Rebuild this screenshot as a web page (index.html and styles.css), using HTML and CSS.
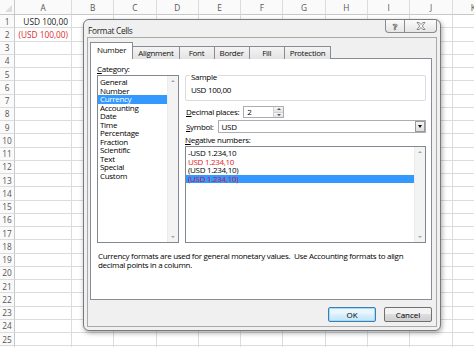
FILE: index.html
```html
<!DOCTYPE html>
<html lang="en">
<head>
    <title>Format Cells</title>
    <link rel="stylesheet" href="styles.css">
</head>
<body>
    <div class="sheet" id="sheet"></div>

    <div class="dialog">
        <div class="titlebar">
            <span class="title">Format Cells</span>
            <div class="caption-buttons">
                <span class="caption-btn help"><span class="help-mark">?</span></span>
                <span class="caption-btn close">
                    <svg width="10" height="8" viewBox="0 0 10 8">
                        <path d="M1 0.5 H3.2 L5 2.6 L6.8 0.5 H9 L6.2 4 L9 7.5 H6.8 L5 5.4 L3.2 7.5 H1 L3.8 4 Z" fill="#fff" stroke="#707070" stroke-width="0.8"/>
                    </svg>
                </span>
            </div>
        </div>

        <div class="client">
            <div class="tabs">
                <span class="tab active">Number</span>
                <span class="tab">Alignment</span>
                <span class="tab">Font</span>
                <span class="tab">Border</span>
                <span class="tab">Fill</span>
                <span class="tab">Protection</span>
            </div>

            <div class="panel">
                <div class="panel-body">
                    <div class="left-col">
                        <div class="label"><u>C</u>ategory:</div>
                        <div class="listbox category-list">
                            <div class="list-items">
                                <div class="item">General</div>
                                <div class="item">Number</div>
                                <div class="item selected">Currency</div>
                                <div class="item">Accounting</div>
                                <div class="item">Date</div>
                                <div class="item">Time</div>
                                <div class="item">Percentage</div>
                                <div class="item">Fraction</div>
                                <div class="item">Scientific</div>
                                <div class="item">Text</div>
                                <div class="item">Special</div>
                                <div class="item">Custom</div>
                            </div>
                            <div class="vscroll">
                                <i class="arrow up"></i>
                                <i class="arrow down"></i>
                            </div>
                        </div>
                    </div>

                    <div class="right-col">
                        <div class="group">
                            <div class="group-title">Sample</div>
                            <div class="sample-value">USD 100,00</div>
                        </div>

                        <div class="field-row decimals">
                            <span class="field-label"><u>D</u>ecimal places:</span>
                            <div class="spinner">
                                <span class="spinner-value">2</span>
                                <div class="spin-buttons">
                                    <span class="spin-btn"><i class="arrow up dark"></i></span>
                                    <span class="spin-btn"><i class="arrow down dark"></i></span>
                                </div>
                            </div>
                        </div>

                        <div class="field-row symbol">
                            <span class="field-label"><u>S</u>ymbol:</span>
                            <div class="select">
                                <span class="select-value">USD</span>
                                <span class="drop-btn"><i class="arrow down black"></i></span>
                            </div>
                        </div>

                        <div class="label"><u>N</u>egative numbers:</div>
                        <div class="listbox negative-list">
                            <div class="list-items">
                                <div class="item">-USD 1.234,10</div>
                                <div class="item red">USD 1.234,10</div>
                                <div class="item">(USD 1.234,10)</div>
                                <div class="item selected red">(USD 1.234,10)</div>
                            </div>
                            <div class="vscroll">
                                <i class="arrow up"></i>
                                <i class="arrow down"></i>
                            </div>
                        </div>
                    </div>
                </div>

                <p class="description">Currency formats are used for general monetary values.&nbsp; Use Accounting formats to align<br>decimal points in a column.</p>
            </div>

            <div class="buttons">
                <button class="btn default">OK</button>
                <button class="btn">Cancel</button>
            </div>
        </div>
    </div>

    <script>
        // build the worksheet grid behind the dialog
        const sheet = document.getElementById('sheet');
        const columns = ['A', 'B', 'C', 'D', 'E', 'F', 'G', 'H', 'I', 'J', 'K'];
        const values = {
            A1: { text: 'USD 100,00' },
            A2: { text: '(USD 100,00)', negative: true }
        };

        function addCell(className, text) {
            const cell = document.createElement('div');
            cell.className = className;
            cell.textContent = text || '';
            sheet.appendChild(cell);
            return cell;
        }

        addCell('cell corner').innerHTML = '<i class="select-all"></i>';
        columns.forEach(col => addCell('cell col-head', col));

        for (let row = 1; row <= 26; row++) {
            addCell('cell row-head', row);
            columns.forEach(col => {
                const value = values[col + row];
                const cell = addCell('cell', value ? value.text : '');
                if (value && value.negative) {
                    cell.classList.add('negative');
                }
            });
        }
    </script>
</body>
</html>
```

FILE: styles.css
```css
body {
    margin: 0;
    width: 474px;
    height: 347px;
    overflow: hidden;
    position: relative;
    background-color: #fff;
    font-family: "Open Sans", "Noto Sans", sans-serif;
    font-size: 8px;
    color: #000;
}

u {
    text-decoration-thickness: 1px;
    text-underline-offset: 1px;
}

/* worksheet */

.sheet {
    display: grid;
    grid-template-columns: 15px 57px repeat(10, 42.3px);
    grid-template-rows: 15px;
    grid-auto-rows: 13.25px;
    font-size: 8.3px;
    color: #222;
}

.cell {
    border-right: 1px solid #dadcdd;
    border-bottom: 1px solid #dadcdd;
    box-sizing: border-box;
    display: flex;
    align-items: center;
    justify-content: flex-end;
    padding-right: 3px;
    white-space: nowrap;
}

.cell.negative {
    color: #e02a2a;
}

.col-head,
.row-head,
.corner {
    justify-content: center;
    padding-right: 0;
    background-color: #fafafa;
    color: #555;
}

.col-head,
.corner {
    border-bottom-color: #c8c8c8;
}

.row-head,
.corner {
    border-right-color: #c8c8c8;
}

.corner {
    position: relative;
}

.select-all {
    position: absolute;
    right: 2px;
    bottom: 2px;
    border-left: 7px solid transparent;
    border-bottom: 7px solid #dcdcdc;
}

/* dialog */

.dialog {
    position: absolute;
    left: 83px;
    top: 19px;
    width: 358px;
    height: 312px;
    box-sizing: border-box;
    border: 1px solid #777a80;
    border-radius: 6px;
    padding: 0 3px 3px;
    background-color: #f0f0f0;
    box-shadow: 1px 2px 5px rgba(0, 0, 0, 0.35);
    display: flex;
    flex-direction: column;
    letter-spacing: -0.3px;
}

.titlebar {
    height: 17px;
    display: flex;
    justify-content: space-between;
    align-items: flex-start;
    flex-shrink: 0;
}

.title {
    margin-top: 6px;
    margin-left: 1px;
    line-height: 10px;
    font-size: 8.3px;
    color: #1e1e1e;
}

.caption-buttons {
    display: flex;
    height: 12px;
    border: 1px solid #8c8c8c;
    border-top: none;
    border-radius: 0 0 4px 4px;
    overflow: hidden;
    background: linear-gradient(#fbfbfb, #e6e6e6);
}

.caption-btn {
    display: flex;
    align-items: center;
    justify-content: center;
}

.caption-btn.help {
    width: 18px;
    border-right: 1px solid #8c8c8c;
}

.caption-btn.close {
    width: 31px;
}

.help-mark {
    font-size: 9px;
    font-weight: bold;
    line-height: 9px;
    color: #fff;
    -webkit-text-stroke: 0.7px #6a6a6a;
}

.client {
    flex: 1;
    border: 1px solid #a9a9a9;
    padding: 4px 4px 4px 2px;
    display: flex;
    flex-direction: column;
}

/* tabs */

.tabs {
    display: flex;
    align-items: flex-end;
    height: 17px;
    margin-bottom: -1px;
    position: relative;
    z-index: 1;
}

.tab {
    height: 13px;
    box-sizing: border-box;
    min-width: 36px;
    padding: 0 5px;
    margin-right: -1px;
    border: 1px solid #898c95;
    border-bottom: none;
    background: linear-gradient(#f4f4f4, #e3e3e3);
    display: flex;
    align-items: center;
    justify-content: center;
    line-height: 10px;
    color: #111;
}

.tab.active {
    height: 17px;
    padding: 0 6px 3px;
    background: #fff;
    position: relative;
    z-index: 2;
}

.panel {
    height: 242px;
    box-sizing: border-box;
    border: 1px solid #898c95;
    background-color: #fff;
    padding: 5px 5px 0 6px;
}

.panel-body {
    display: flex;
    gap: 6px;
}

.left-col {
    width: 82px;
    display: flex;
    flex-direction: column;
}

.right-col {
    flex: 1;
    display: flex;
    flex-direction: column;
}

.label {
    line-height: 10px;
    height: 10px;
    margin-bottom: 1px;
    white-space: nowrap;
}

.listbox {
    border: 1px solid #828790;
    background-color: #fff;
    display: flex;
    box-sizing: border-box;
}

.category-list {
    height: 168px;
}

.negative-list {
    height: 97px;
}

.list-items {
    flex: 1;
    padding-top: 2px;
}

.item {
    height: 8.55px;
    line-height: 8.55px;
    padding-left: 2px;
    white-space: nowrap;
}

.item.red {
    color: #e21b1b;
}

.item.selected {
    background-color: #3399ff;
    color: #fff;
}

.item.selected.red {
    color: #c4124a;
}

.vscroll {
    width: 10px;
    background-color: #f3f3f3;
    border-left: 1px solid #ececec;
    display: flex;
    flex-direction: column;
    justify-content: space-between;
    align-items: center;
    padding: 4px 0;
}

.arrow {
    display: block;
    width: 0;
    height: 0;
    border-left: 2px solid transparent;
    border-right: 2px solid transparent;
}

.arrow.up {
    border-bottom: 2px solid #a6a6a6;
}

.arrow.down {
    border-top: 2px solid #a6a6a6;
}

.arrow.dark.up {
    border-bottom-color: #555;
}

.arrow.dark.down {
    border-top-color: #555;
}

.arrow.black {
    border-left-width: 2.5px;
    border-right-width: 2.5px;
    border-top: 3px solid #111;
}

/* sample group */

.group {
    margin-top: 11px;
    height: 26px;
    box-sizing: border-box;
    border: 1px solid #dcdcdc;
    border-radius: 2px;
    padding-left: 5px;
}

.group-title {
    width: fit-content;
    margin-top: -4px;
    margin-left: -1px;
    padding: 0 1px;
    line-height: 9px;
    background-color: #fff;
}

.sample-value {
    margin-top: 4px;
    line-height: 9px;
}

/* fields */

.field-row {
    display: flex;
    align-items: center;
    gap: 4px;
    white-space: nowrap;
}

.field-row.decimals {
    margin-top: 5px;
    height: 12px;
}

.field-row.symbol {
    margin-top: 2px;
    margin-bottom: 2px;
    height: 13px;
}

.field-label {
    padding-left: 1px;
    line-height: 10px;
}

.spinner {
    width: 41px;
    height: 12px;
    box-sizing: border-box;
    border: 1px solid #abadb3;
    background-color: #fff;
    display: flex;
    justify-content: space-between;
}

.spinner-value,
.select-value {
    padding-left: 3px;
    line-height: 10px;
}

.spin-buttons {
    width: 10px;
    display: flex;
    flex-direction: column;
}

.spin-btn {
    flex: 1;
    display: flex;
    align-items: center;
    justify-content: center;
    background: linear-gradient(#f7f7f7, #e2e2e2);
    border-left: 1px solid #d2d2d2;
}

.spin-btn + .spin-btn {
    border-top: 1px solid #d2d2d2;
}

.select {
    flex: 1;
    height: 13px;
    box-sizing: border-box;
    border: 1px solid #abadb3;
    background-color: #fff;
    display: flex;
    align-items: center;
    justify-content: space-between;
}

.drop-btn {
    width: 10px;
    height: 11px;
    box-sizing: border-box;
    border: 1px solid #9a9a9a;
    background: linear-gradient(#f6f6f6, #dedede);
    display: flex;
    align-items: center;
    justify-content: center;
}

.description {
    margin: 8px 0 0;
    padding-left: 1px;
    line-height: 9px;
    white-space: nowrap;
}

/* buttons */

.buttons {
    display: flex;
    justify-content: flex-end;
    gap: 8px;
    margin-top: 7px;
}

.btn {
    width: 48px;
    height: 15px;
    padding: 0;
    border: 1px solid #707070;
    border-radius: 2px;
    background: linear-gradient(#f2f2f2 50%, #dddddd 50%, #cfcfcf);
    font-family: "Open Sans", "Noto Sans", sans-serif;
    font-size: 8px;
    line-height: 12px;
    color: #000;
}

.btn.default {
    border-color: #3c7fb1;
    box-shadow: inset 0 0 0 1px #a8d8f3;
    background: linear-gradient(#eaf6fd 50%, #d9f0fc 50%, #bee6fd);
}
```
